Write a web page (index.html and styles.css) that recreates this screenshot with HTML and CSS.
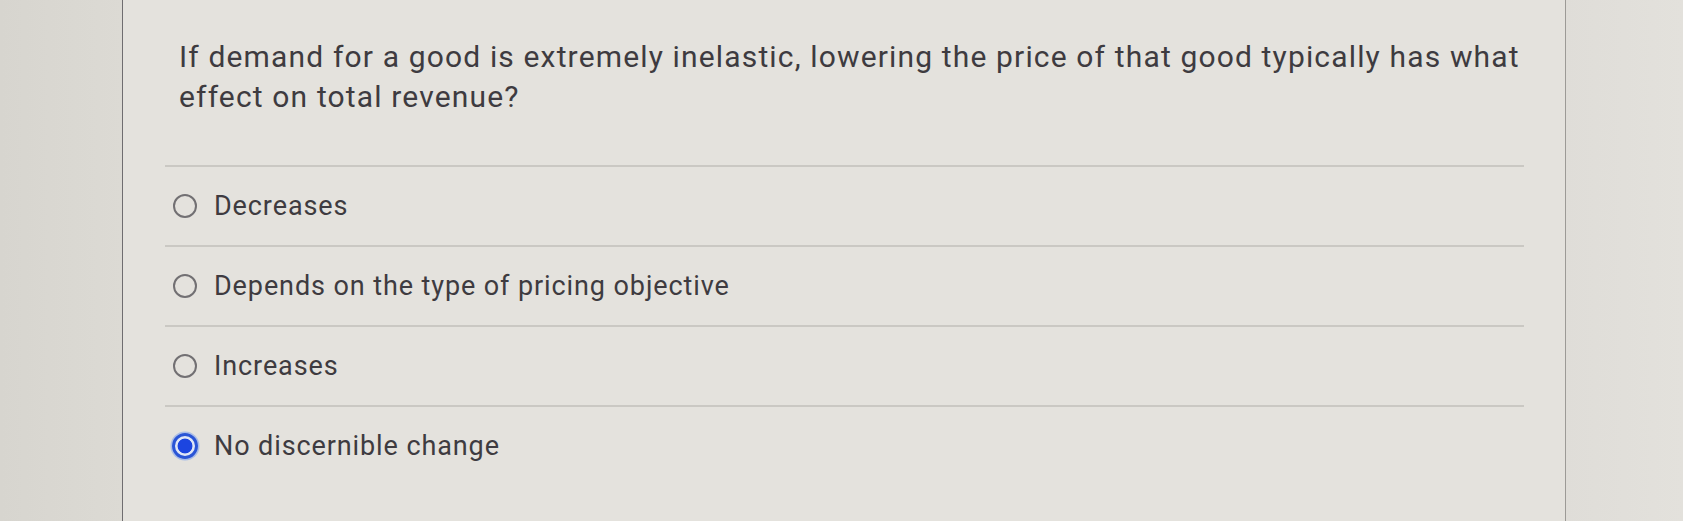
FILE: index.html
```html
<!DOCTYPE html>
<html lang="en">
<head>
<meta charset="utf-8">
<title>Question</title>
<link rel="stylesheet" href="styles.css">
</head>
<body>
  <div class="page">
    <div class="card">
      <div class="question">If demand for a good is extremely inelastic, lowering the price of that good typically has what effect on total revenue?</div>
      <div class="options">
        <div class="option"><span class="radio"></span><span class="label">Decreases</span></div>
        <div class="option"><span class="radio"></span><span class="label">Depends on the type of pricing objective</span></div>
        <div class="option"><span class="radio"></span><span class="label">Increases</span></div>
        <div class="option"><span class="radio checked"></span><span class="label">No discernible change</span></div>
      </div>
    </div>
  </div>
</body>
</html>
```
FILE: styles.css
```css
html, body {
  margin: 0;
  padding: 0;
  height: 100%;
}
body {
  background: #d9d7d1;
  font-family: Roboto, "Liberation Sans", sans-serif;
  color: #3e3b40;
  overflow: hidden;
}
.page {
  display: flex;
  height: 100%;
  background: linear-gradient(90deg, #d7d5cf 0, #dcdad4 123px, #dfddd8 1565px, #e3e1dc 100%);
}
.card {
  margin-left: 122px;
  width: 1444px;
  background: #e4e2dd;
  border-left: 1px solid #6f6d70;
  border-right: 1px solid #9c9a96;
  padding-top: 37px;
  box-sizing: border-box;
}
.question {
  padding-left: 56px;
  width: 1420px;
  box-sizing: border-box;
  font-size: 30px;
  line-height: 40px;
  letter-spacing: 1.15px;
}
.options {
  margin-top: 48px;
  margin-left: 42px;
  margin-right: 41px;
}
.option {
  border-top: 2px solid #cac8c3;
  height: 80px;
  box-sizing: border-box;
  padding: 24px 0 24px 8px;
  display: flex;
  align-items: center;
  gap: 17px;
}
.radio {
  width: 24px;
  height: 24px;
  border: 2px solid #727073;
  border-radius: 50%;
  box-sizing: border-box;
  flex: none;
}
.radio.checked {
  width: 26px;
  height: 26px;
  margin-left: -1px;
  margin-right: -1px;
  border: 3px solid #2a55d6;
  background: radial-gradient(circle, #1c45e0 0, #1c45e0 7px, #dfe6f6 7.8px);
  box-shadow: 0 0 0 1.5px #a9bde8;
}
.label {
  font-size: 27px;
  line-height: 30px;
  letter-spacing: 0.9px;
}
```
